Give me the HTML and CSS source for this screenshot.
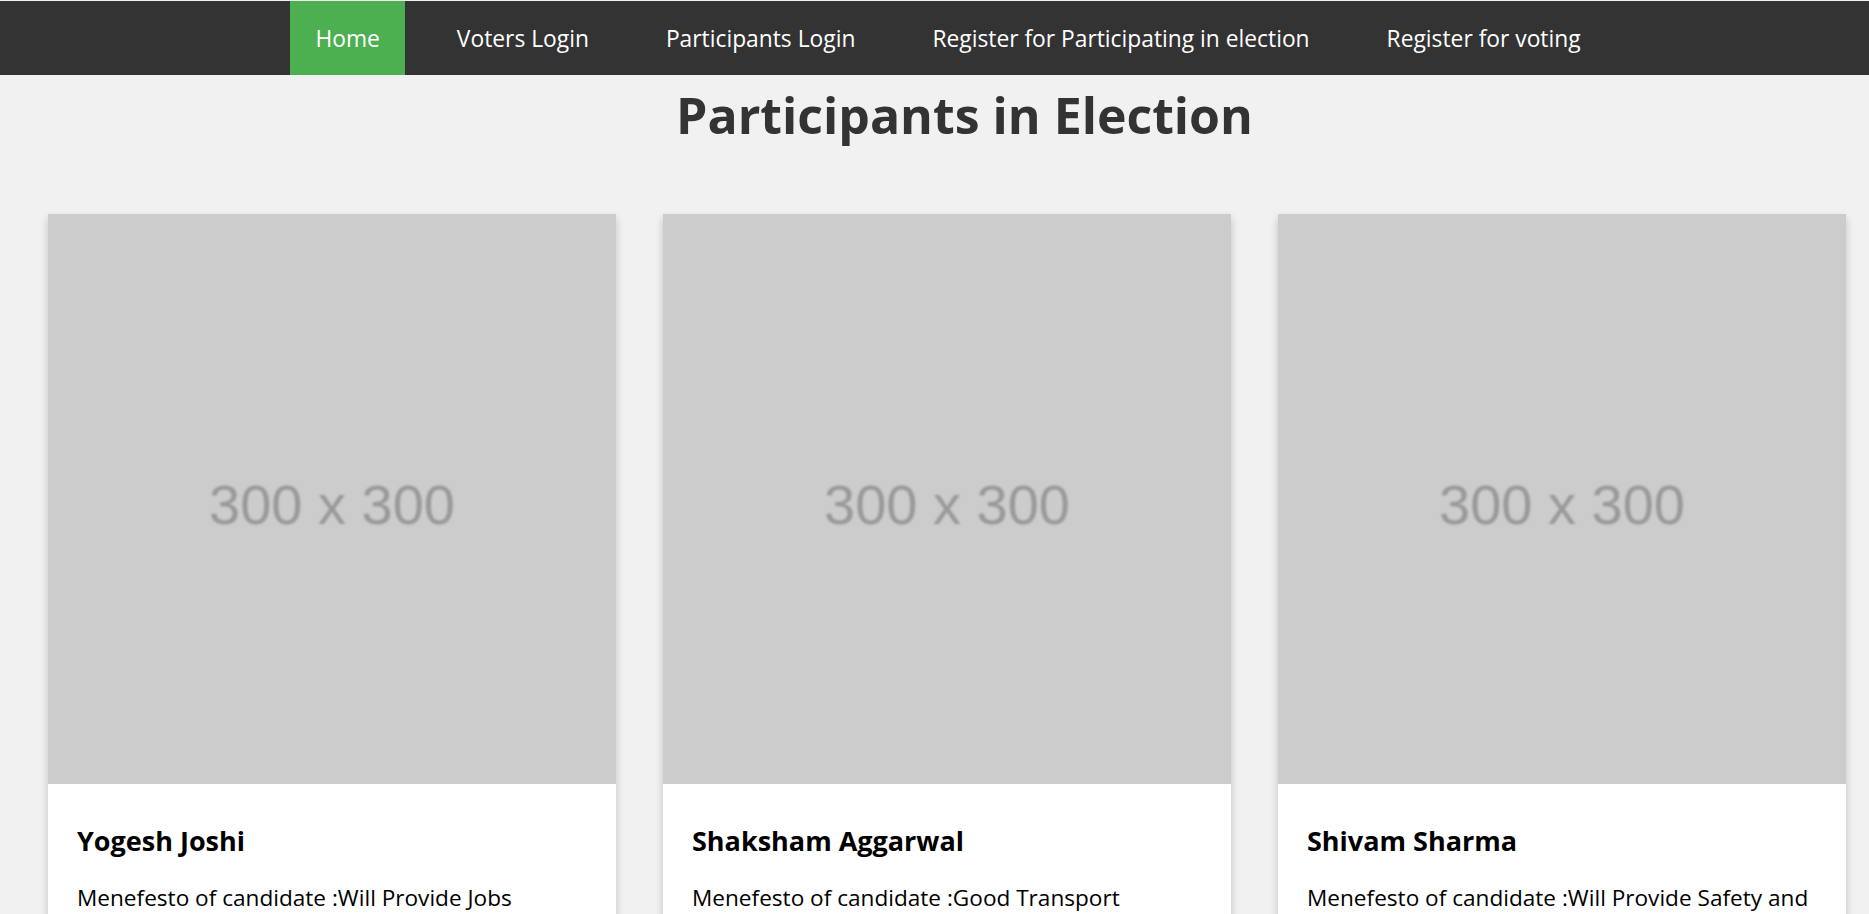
FILE: index.html
```html
<!DOCTYPE html>
<html lang="en">
<head>
<meta charset="utf-8">
<title>Participants in Election</title>
<link rel="stylesheet" href="styles.css">
</head>
<body>
<nav class="topnav">
  <a class="nav-link active" href="#">Home</a>
  <a class="nav-link" href="#">Voters Login</a>
  <a class="nav-link" href="#">Participants Login</a>
  <a class="nav-link" href="#">Register for Participating in election</a>
  <a class="nav-link" href="#">Register for voting</a>
</nav>
<main class="page">
  <h1 class="title">Participants in Election</h1>
  <div class="cards">
    <div class="card">
      <div class="thumb"><span>300 x 300</span></div>
      <div class="card-body">
        <h2 class="name">Yogesh Joshi</h2>
        <p class="desc">Menefesto of candidate :Will Provide Jobs</p>
      </div>
    </div>
    <div class="card">
      <div class="thumb"><span>300 x 300</span></div>
      <div class="card-body">
        <h2 class="name">Shaksham Aggarwal</h2>
        <p class="desc">Menefesto of candidate :Good Transport</p>
      </div>
    </div>
    <div class="card">
      <div class="thumb"><span>300 x 300</span></div>
      <div class="card-body">
        <h2 class="name">Shivam Sharma</h2>
        <p class="desc">Menefesto of candidate :Will Provide Safety and</p>
      </div>
    </div>
  </div>
</main>
</body>
</html>
```
FILE: styles.css
```css
* { box-sizing: border-box; }
html, body { margin: 0; padding: 0; }
body {
  background: #f1f1f1;
  font-family: "Open Sans", "Noto Sans", sans-serif;
  overflow: hidden;
}
.topnav {
  margin-top: 1px;
  height: 74px;
  background: #333333;
  display: flex;
  justify-content: center;
  align-items: stretch;
}
.nav-link {
  margin-left: 27px;
  padding: 0 25px;
  display: flex;
  align-items: center;
  color: #ffffff;
  text-decoration: none;
  font-size: 22.8px;
}
.nav-link.active { background: #4caf50; }
.page { padding: 0 0 0 48px; }
.title {
  margin: 0;
  padding: 5px 0 0 12px;
  text-align: center;
  font-size: 50px;
  font-weight: 700;
  color: #333333;
  line-height: 70px;
}
.cards {
  margin-top: 64px;
  display: flex;
  gap: 47px;
}
.card {
  width: 568px;
  flex: none;
  background: #ffffff;
  box-shadow: 0 4px 8px 0 rgba(0, 0, 0, 0.2);
}
.thumb {
  height: 570px;
  background: #cccccc;
  display: flex;
  align-items: center;
  justify-content: center;
}
.thumb span {
  font-family: "Liberation Sans", Arial, sans-serif;
  font-size: 56px;
  color: #999999;
  filter: blur(0.8px);
  margin-top: 10px;
}
.card-body { padding: 38px 12px 26px 29px; }
.name {
  margin: 0 0 23px;
  font-size: 27px;
  font-weight: 700;
  color: #000;
}
.desc {
  margin: 0;
  font-size: 22.6px;
  color: #000;
  white-space: nowrap;
}
```
